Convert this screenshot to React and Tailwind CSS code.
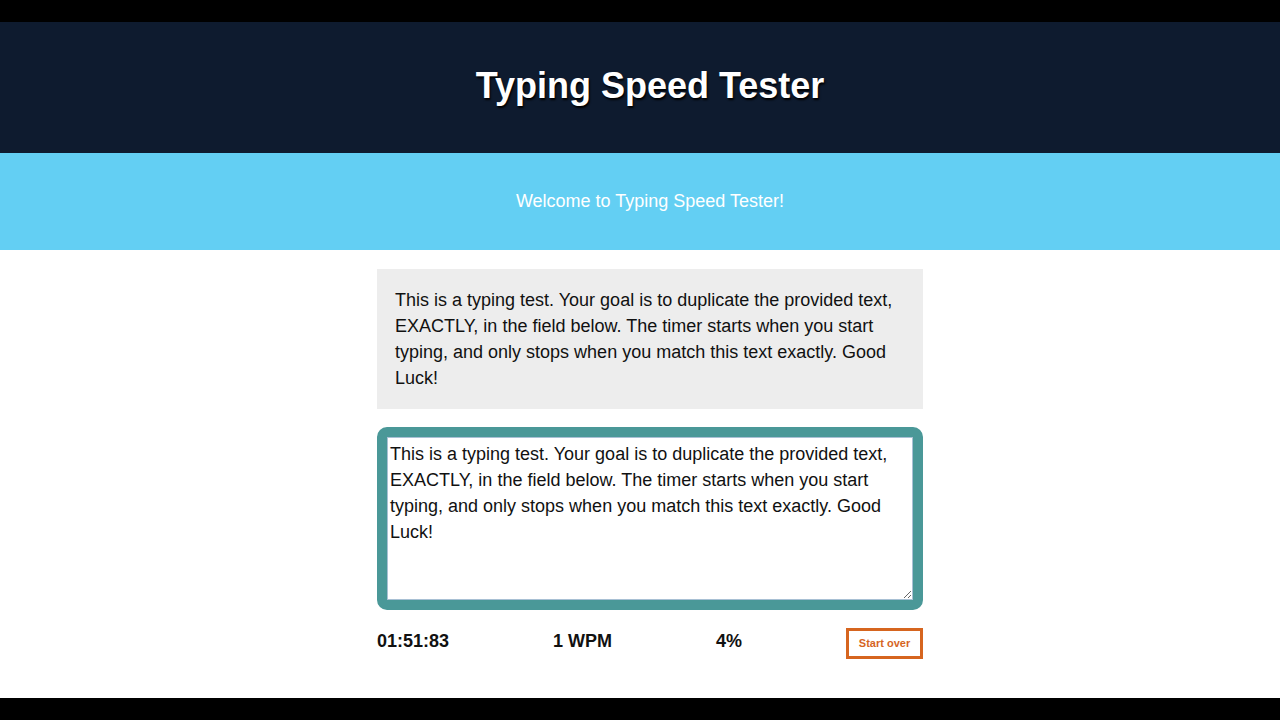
const intro =
	"This is a typing test. Your goal is to duplicate the provided text, EXACTLY, in the field below. The timer starts when you start typing, and only stops when you match this text exactly. Good Luck!";

const App = () => {
	return (
		<div className="flex flex-col h-[720px] bg-black font-['Liberation_Sans',Arial,sans-serif]">
			<div className="h-[22px] bg-black" />
			<header className="h-[131px] bg-[#0e1b2f] flex items-center justify-center pl-[20px]">
				<h1 className="text-[36px] font-bold text-white [text-shadow:1px_2px_2px_#000] mb-[4px]">
					Typing Speed Tester
				</h1>
			</header>
			<div className="h-[97px] bg-[#63cff3] flex items-center justify-center pl-[20px]">
				<p className="text-[18px] text-white">Welcome to Typing Speed Tester!</p>
			</div>
			<main className="flex-1 bg-white pl-[20px]">
				<div className="w-[546px] mx-auto pt-[19px]">
					<div className="bg-[#ededed] p-[18px] text-[18px] leading-[26px] text-[#111]">
						{intro}
					</div>
					<div className="mt-[18px] border-[10px] border-[#4a9898] rounded-[10px]">
						<textarea
							className="block w-full h-[163px] border border-[#a8c0d4] px-[2px] pt-[3px] pb-[2px] text-[18px] leading-[26px] text-[#111] outline-none resize-y font-['Liberation_Sans',Arial,sans-serif]"
							defaultValue={intro}
						/>
					</div>
					<div className="mt-[18px] flex items-center justify-between text-[18px] font-bold text-[#111]">
						<span className="mb-[4px]">01:51:83</span>
						<span className="mb-[4px]">1 WPM</span>
						<span className="mb-[4px]">4%</span>
						<button className="h-[31px] w-[77px] border-[3px] border-[#d6651f] text-[11px] font-bold text-[#d6651f]">
							Start over
						</button>
					</div>
				</div>
			</main>
			<div className="h-[22px] bg-black" />
		</div>
	);
};

export default App;
